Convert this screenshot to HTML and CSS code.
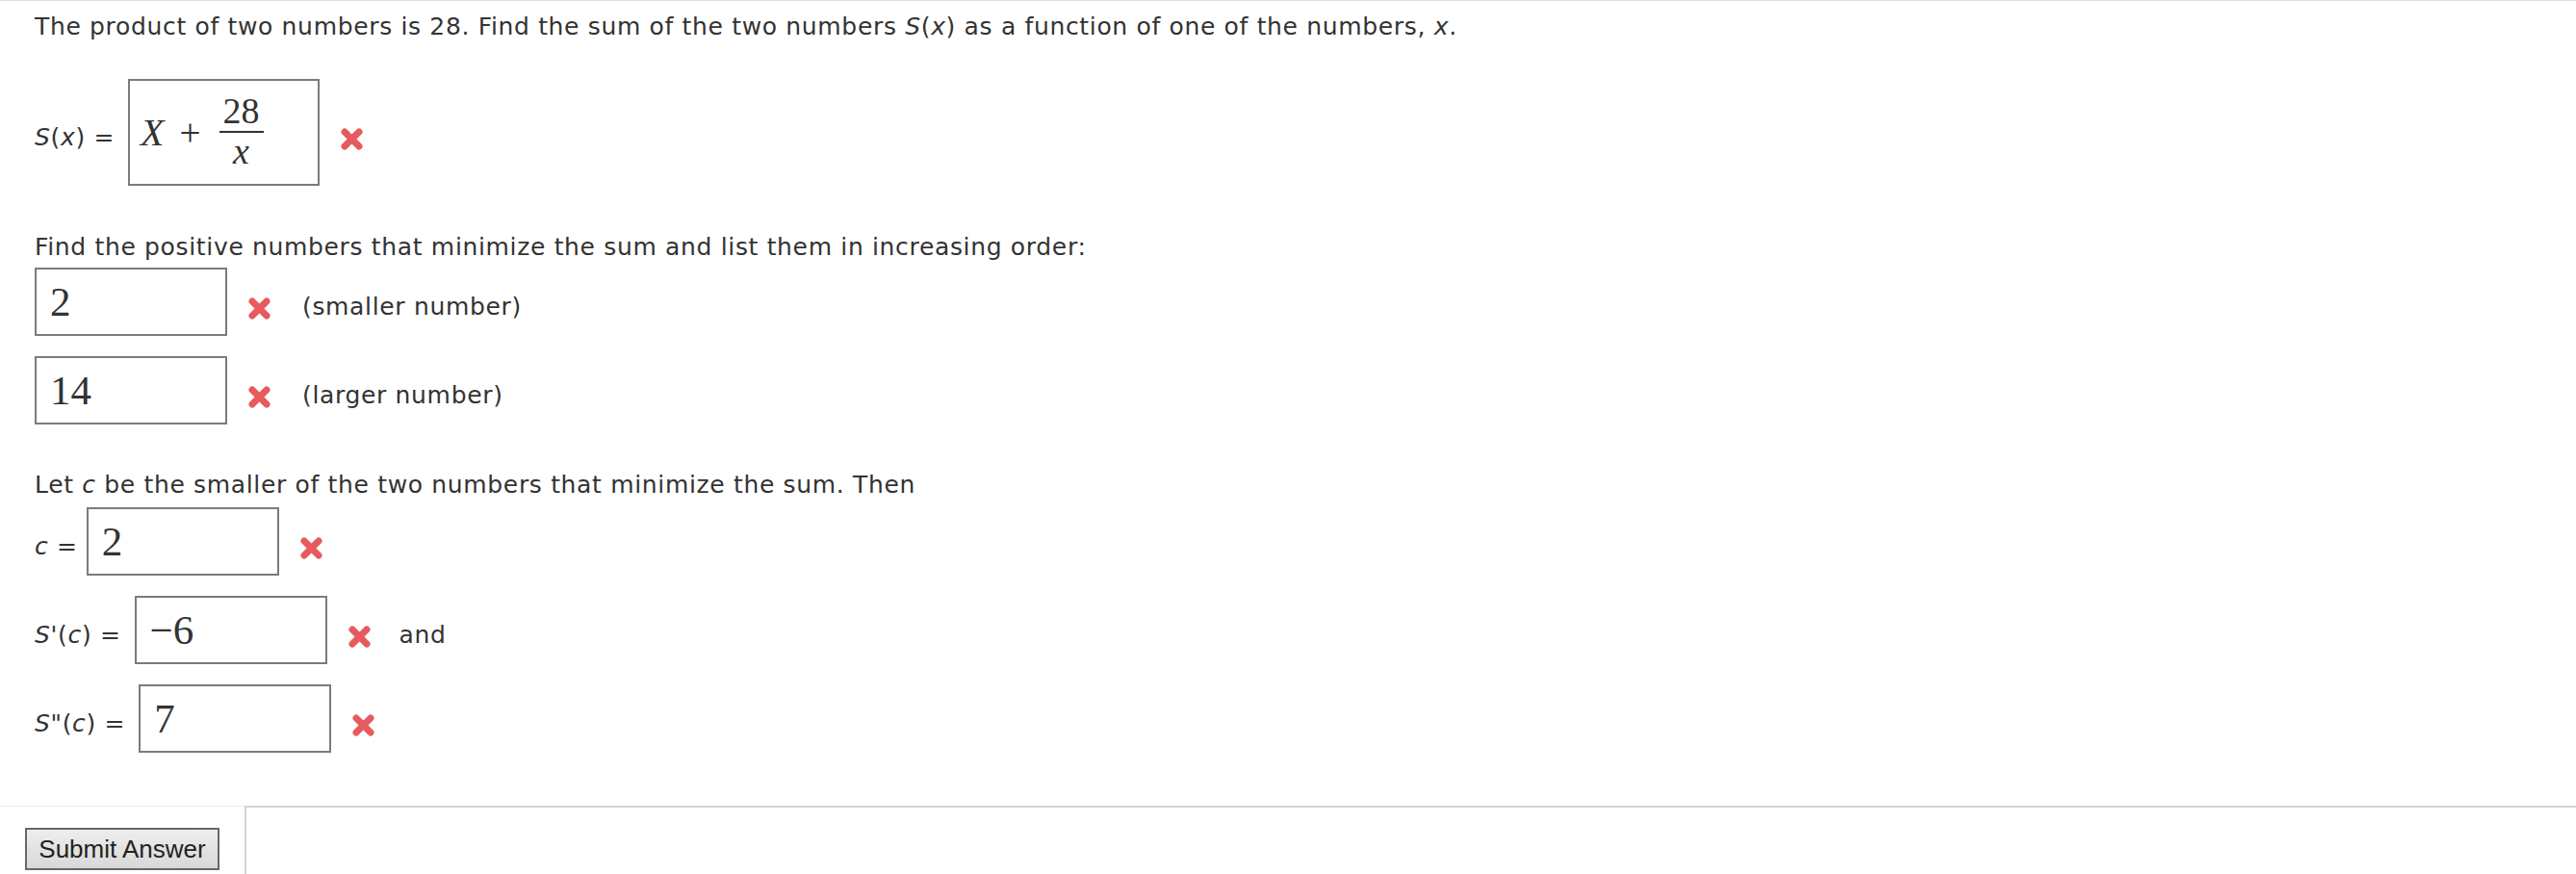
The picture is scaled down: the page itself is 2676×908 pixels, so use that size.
FILE: index.html
```html
<!DOCTYPE html>
<html lang="en">
<head>
  <meta charset="UTF-8">
  <title>Sum of two numbers</title>
  <link rel="stylesheet" href="styles.css">
</head>
<body>
  <div class="question">
    <p class="intro">The product of two numbers is 28. Find the sum of the two numbers <i>S</i>(<i>x</i>) as a function of one of the numbers, <i>x</i>.</p>

    <!-- S(x) 입력칸 -->
    <div class="row row-sx">
      <span class="label"><i>S</i>(<i>x</i>) =</span>
      <span class="answer answer-tall">
        <span class="m-var">X</span><span class="m-plus">+</span>
        <span class="frac"><span class="num">28</span><span class="den">x</span></span>
      </span>
      <svg class="wrong" viewBox="0 0 27 25" width="27" height="25"><path d="M6 5 L21 20 M21 5 L6 20"/></svg>
    </div>

    <p class="prompt">Find the positive numbers that minimize the sum and list them in increasing order:</p>

    <div class="row row-first">
      <span class="answer">2</span>
      <svg class="wrong" viewBox="0 0 27 25" width="27" height="25"><path d="M6 5 L21 20 M21 5 L6 20"/></svg>
      <span class="note">(smaller number)</span>
    </div>
    <div class="row">
      <span class="answer">14</span>
      <svg class="wrong" viewBox="0 0 27 25" width="27" height="25"><path d="M6 5 L21 20 M21 5 L6 20"/></svg>
      <span class="note">(larger number)</span>
    </div>

    <p class="prompt prompt-c">Let <i>c</i> be the smaller of the two numbers that minimize the sum. Then</p>

    <div class="row row-c">
      <span class="label label-c"><i>c</i> =</span>
      <span class="answer">2</span>
      <svg class="wrong" viewBox="0 0 27 25" width="27" height="25"><path d="M6 5 L21 20 M21 5 L6 20"/></svg>
    </div>
    <div class="row">
      <span class="label"><i>S</i>'(<i>c</i>) =</span>
      <span class="answer">&minus;6</span>
      <svg class="wrong" viewBox="0 0 27 25" width="27" height="25"><path d="M6 5 L21 20 M21 5 L6 20"/></svg>
      <span class="note note-and">and</span>
    </div>
    <div class="row">
      <span class="label"><i>S</i>"(<i>c</i>) =</span>
      <span class="answer">7</span>
      <svg class="wrong" viewBox="0 0 27 25" width="27" height="25"><path d="M6 5 L21 20 M21 5 L6 20"/></svg>
    </div>
  </div>

  <div class="footer">
    <div class="footer-left"><button class="submit">Submit Answer</button></div>
    <div class="footer-right"></div>
  </div>
</body>
</html>
```

FILE: styles.css
```css
* {margin:0; padding:0; box-sizing:border-box;}

body{
  border-top: 1px solid #dedede;
  font-family: "DejaVu Sans", Verdana, sans-serif;
  font-size: 25px;
  letter-spacing: 0.66px;
  color: #333;
  background: #fff;
}

.question{
  padding-left: 36px;
}

.intro{
  margin-top: 12px;
  line-height: 30px;
}

.prompt{
  margin-top: 49px;
  line-height: 30px;
}

.prompt-c{
  margin-top: 48px;
}

.row{
  display: flex;
  align-items: center;
  margin-top: 21px;
}

.row-sx{ margin-top: 39px; }
.row-first{ margin-top: 6px; }
.row-c{ margin-top: 8px; }

.label{
  padding-top: 11px;
  line-height: 30px;
  margin-right: 14px;
  white-space: nowrap;
}

.label-c{
  margin-right: 9px;
}

.note{
  padding-top: 11px;
  line-height: 30px;
  margin-left: 31px;
}

.note-and{
  margin-left: 28px;
}

/* 입력칸 */
.answer{
  display: flex;
  align-items: center;
  width: 200px;
  height: 71px;
  border: 2px solid #7b7b7b;
  padding-left: 14px;
  font-family: "Liberation Serif", "DejaVu Serif", serif;
  font-size: 43px;
  line-height: 43px;
  letter-spacing: 0;
  color: #333;
}

.answer-tall{
  width: 199px;
  height: 111px;
  padding-left: 11px;
  font-size: 39px;
}

.m-var{
  font-style: italic;
  font-size: 40px;
  line-height: 38px;
}

.m-plus{
  line-height: 38px;
  margin-left: 16px;
}

.frac{
  display: inline-flex;
  flex-direction: column;
  align-items: center;
  margin-left: 19px;
  font-size: 38px;
  margin-top: -4px;
}

.num{
  line-height: 38px;
  padding: 0 4px 2px;
  border-bottom: 2px solid #333;
}

.den{
  font-style: italic;
  line-height: 38px;
}

.wrong{
  margin-left: 20px;
  margin-top: 14px;
  flex-shrink: 0;
  filter: blur(0.4px);
}

.wrong path{
  fill: none;
  stroke: #e65b5d;
  stroke-width: 7;
  stroke-linecap: round;
}

/* 하단 버튼 영역 */
.footer{
  display: flex;
  margin-top: 55px;
  height: 72px;
}

.footer-left{
  width: 254px;
  border-top: 1px solid #ededed;
  padding: 22px 0 0 26px;
}

.footer-right{
  flex: 1;
  border-top: 2px solid #d2d2d2;
  border-left: 2px solid #d2d2d2;
}

.submit{
  width: 202px;
  height: 44px;
  border: 2px solid #686868;
  background: linear-gradient(#eeeeee, #d8d8d8);
  font-family: "Liberation Sans", Arial, sans-serif;
  font-size: 26px;
  letter-spacing: 0;
  color: #222;
}
```
